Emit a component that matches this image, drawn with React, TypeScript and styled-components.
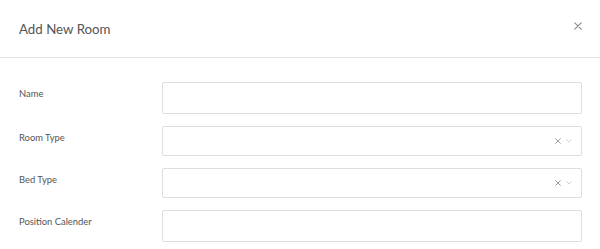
import React from 'react'
import styled, { createGlobalStyle } from 'styled-components'

const GlobalStyle = createGlobalStyle`
  html, body {
    margin: 0;
    padding: 0;
    background: #fff;
  }
  body {
    font-family: Lato, "Noto Sans", Arial, sans-serif;
  }
`

const Modal = styled.div`
  width: 600px;
  height: 249px;
  background: #fff;
  overflow: hidden;
`

const Header = styled.div`
  display: flex;
  align-items: center;
  justify-content: space-between;
  height: 58px;
  padding: 0 18px 0 19px;
  border-bottom: 1px solid #e3e3e3;
  box-sizing: border-box;
`

const Title = styled.h4`
  margin: 0;
  font-size: 13.3px;
  font-weight: 400;
  color: #555;
`

const CloseButton = styled.button`
  display: flex;
  align-self: flex-start;
  margin-top: 22px;
  width: 8px;
  height: 8px;
  padding: 0;
  border: none;
  background: none;
  cursor: pointer;
`

const Body = styled.div`
  display: flex;
  flex-direction: column;
  gap: 12px;
  padding: 24px 18px 0 19px;
`

const Row = styled.div`
  display: grid;
  grid-template-columns: 143px 1fr;
  align-items: start;
`

const Label = styled.label`
  padding-top: 5px;
  font-size: 9.4px;
  line-height: 14px;
  color: #555;
`

const Field = styled.div<{ $tall?: boolean }>`
  display: flex;
  align-items: center;
  justify-content: flex-end;
  height: ${p => (p.$tall ? 32 : 30)}px;
  border: 1px solid #dedede;
  border-radius: 2px;
  box-sizing: border-box;
  padding-right: 9px;
  gap: 5px;
`

const Indicator = styled.span`
  display: flex;
  align-items: center;
`

const Cross = ({ size, color }: { size: number; color: string }) => (
  <svg width={size} height={size} viewBox="0 0 10 10">
    <path d="M1 1L9 9M9 1L1 9" stroke={color} strokeWidth="1.4" strokeLinecap="round" />
  </svg>
)

const Chevron = () => (
  <svg width="6" height="4" viewBox="0 0 6 4">
    <path d="M0.5 0.5L3 3L5.5 0.5" stroke="#cfcfcf" strokeWidth="1" fill="none" />
  </svg>
)

const rows = [
  { label: 'Name', select: false, tall: true },
  { label: 'Room Type', select: true },
  { label: 'Bed Type', select: true },
  { label: 'Position Calender', select: false, tall: true },
]

export default function App() {
  return (
    <Modal>
      <GlobalStyle />
      <Header>
        <Title>Add New Room</Title>
        <CloseButton aria-label="close">
          <Cross size={8} color="#8a8a8a" />
        </CloseButton>
      </Header>
      <Body>
        {rows.map(r => (
          <Row key={r.label}>
            <Label>{r.label}</Label>
            <Field $tall={r.tall}>
              {r.select && (
                <>
                  <Indicator>
                    <Cross size={6} color="#8f8f8f" />
                  </Indicator>
                  <Indicator>
                    <Chevron />
                  </Indicator>
                </>
              )}
            </Field>
          </Row>
        ))}
      </Body>
    </Modal>
  )
}
